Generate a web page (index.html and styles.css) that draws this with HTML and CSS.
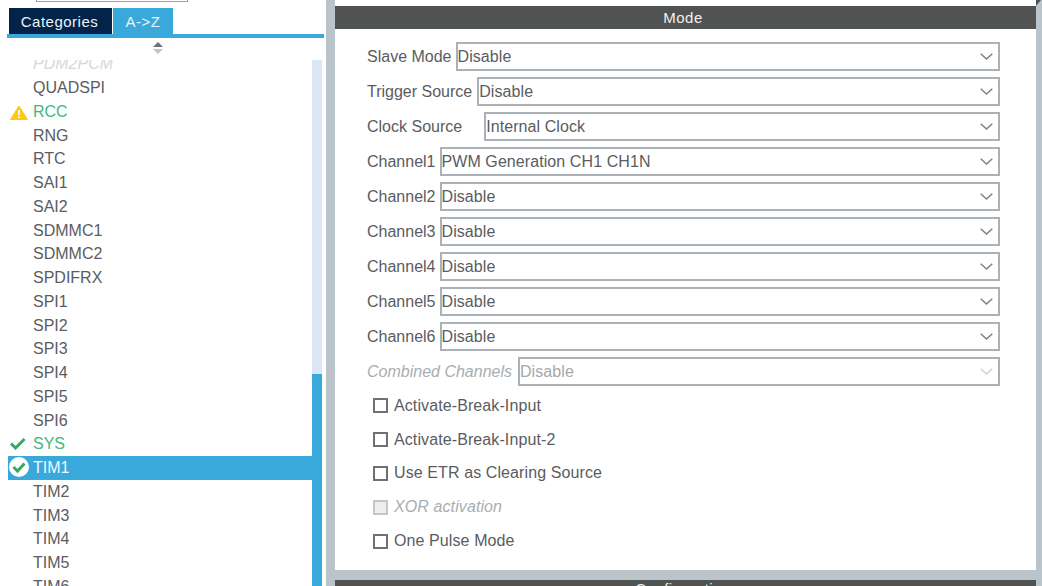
FILE: index.html
```html
<!DOCTYPE html>
<html lang="en">
<head>
<meta charset="utf-8">
<title>Pinout mode</title>
<link rel="stylesheet" href="styles.css">
</head>
<body>
<svg class="defs" width="0" height="0" aria-hidden="true">
  <symbol id="chev" viewBox="0 0 13 7"><path d="M0.7 0.7 L6.5 6 L12.3 0.7" fill="none" stroke="currentColor" stroke-width="1.5"/></symbol>
</svg>
<div class="app">
  <aside class="side">
    <div class="search-stub"></div>
    <div class="tabs">
      <div class="tab tab-dark">Categories</div>
      <div class="tab tab-blue">A-&gt;Z</div>
    </div>
    <div class="list-panel">
      <div class="sorter">
        <svg width="12" height="14" viewBox="0 0 12 14"><path d="M6 1 L11 6 H1 Z" fill="#6f7273"/><path d="M1 8 H11 L6 13 Z" fill="#c2c5c6"/></svg>
      </div>
      <div class="list-body">
        <div class="list">
          <div class="row row-ghost">PDM2PCM</div>
          <div class="row">QUADSPI</div>
          <div class="row row-ok"><svg class="ico" width="18" height="15" viewBox="0 0 18 15"><path d="M9 1 L17.5 14.5 H0.5 Z" fill="#fbc916" stroke="#fbc916" stroke-linejoin="round"/><path d="M9 5 V10 M9 11.3 V13" stroke="#fff" stroke-width="1.8"/></svg>RCC</div>
          <div class="row">RNG</div>
          <div class="row">RTC</div>
          <div class="row">SAI1</div>
          <div class="row">SAI2</div>
          <div class="row">SDMMC1</div>
          <div class="row">SDMMC2</div>
          <div class="row">SPDIFRX</div>
          <div class="row">SPI1</div>
          <div class="row">SPI2</div>
          <div class="row">SPI3</div>
          <div class="row">SPI4</div>
          <div class="row">SPI5</div>
          <div class="row">SPI6</div>
          <div class="row row-ok"><svg class="ico ico-check" width="16" height="13" viewBox="0 0 16 13"><path d="M1 6.5 L5.5 11 L14.5 2" fill="none" stroke="#3ba56b" stroke-width="3"/></svg>SYS</div>
          <div class="row row-sel"><svg class="ico ico-round" width="20" height="20" viewBox="0 0 20 20"><circle cx="10" cy="10" r="10" fill="#fff"/><path d="M4.5 10 L8.5 14 L15.5 6.5" fill="none" stroke="#3ba56b" stroke-width="3"/></svg>TIM1</div>
          <div class="row">TIM2</div>
          <div class="row">TIM3</div>
          <div class="row">TIM4</div>
          <div class="row">TIM5</div>
          <div class="row">TIM6</div>
        </div>
        <div class="scrolltrack"><div class="scrollthumb"></div></div>
      </div>
    </div>
  </aside>
  <div class="divider"></div>
  <main class="main">
    <div class="head">Mode</div>
    <div class="form">
      <div class="field"><label class="lab">Slave Mode</label><div class="sel"><span>Disable</span><svg class="chev"><use href="#chev"/></svg></div></div>
      <div class="field"><label class="lab lab-mid">Trigger Source</label><div class="sel"><span>Disable</span><svg class="chev"><use href="#chev"/></svg></div></div>
      <div class="field"><label class="lab lab-wide">Clock Source</label><div class="sel"><span>Internal Clock</span><svg class="chev"><use href="#chev"/></svg></div></div>
      <div class="field"><label class="lab">Channel1</label><div class="sel"><span>PWM Generation CH1 CH1N</span><svg class="chev"><use href="#chev"/></svg></div></div>
      <div class="field"><label class="lab">Channel2</label><div class="sel"><span>Disable</span><svg class="chev"><use href="#chev"/></svg></div></div>
      <div class="field"><label class="lab">Channel3</label><div class="sel"><span>Disable</span><svg class="chev"><use href="#chev"/></svg></div></div>
      <div class="field"><label class="lab">Channel4</label><div class="sel"><span>Disable</span><svg class="chev"><use href="#chev"/></svg></div></div>
      <div class="field"><label class="lab">Channel5</label><div class="sel"><span>Disable</span><svg class="chev"><use href="#chev"/></svg></div></div>
      <div class="field"><label class="lab">Channel6</label><div class="sel"><span>Disable</span><svg class="chev"><use href="#chev"/></svg></div></div>
      <div class="field field-off"><label class="lab">Combined Channels</label><div class="sel"><span>Disable</span><svg class="chev"><use href="#chev"/></svg></div></div>
      <div class="checks">
        <div class="check"><span class="box"></span>Activate-Break-Input</div>
        <div class="check"><span class="box"></span>Activate-Break-Input-2</div>
        <div class="check"><span class="box"></span>Use ETR as Clearing Source</div>
        <div class="check check-off"><span class="box"></span>XOR activation</div>
        <div class="check"><span class="box"></span>One Pulse Mode</div>
      </div>
    </div>
    <div class="gap"></div>
    <div class="head head-next">Configuration</div>
  </main>
</div>
</body>
</html>
```
FILE: styles.css
```css
* { box-sizing: border-box; }
html, body { margin: 0; height: 100%; overflow: hidden; background: #fff; }
body { font-family: "Liberation Sans", Arial, sans-serif; font-size: 16px; color: #5a5c62; }
.defs { position: absolute; }
.app { display: flex; width: 1042px; height: 586px; overflow: hidden; background: #b9c5cb; }
.side { width: 326px; flex: none; padding-left: 7px; background: #fff; }
.search-stub { width: 152px; height: 2px; margin-left: 29px; border: 1px solid #9aa0a5; border-top: 0; }
.tabs { display: flex; gap: 1px; margin: 6px 0 0 2px; height: 26px; }
.tab { color: #eef3f6; display: flex; align-items: center; justify-content: center; font-size: 15px; letter-spacing: .5px; }
.tab-dark { width: 103px; padding-right: 2px; background: #03234b; }
.tab-blue { width: 60px; background: #39a9dc; }
.list-panel { height: 552px; border-top: 4px solid #39a9dc; margin-right: 2px; }
.sorter { height: 22px; display: flex; justify-content: center; padding: 3px 0 0 0; width: 301px; }
.list-body { display: flex; height: 526px; overflow: hidden; }
.list { flex: 1; padding-left: 1px; margin-top: -7.7px; }
.row { height: 23.75px; line-height: 23.75px; padding-left: 25px; position: relative; white-space: nowrap; }
.row-ghost { color: #d3d8dd; font-style: italic; overflow: hidden; }
.row-ok { color: #3fb97c; }
.row-sel { background: #39a9dc; color: #f2f8fb; }
.ico { position: absolute; left: 2px; top: 5px; }
.ico-check { left: 2px; top: 5px; }
.ico-round { left: 1px; top: 1px; }
.scrolltrack { width: 10px; flex: none; margin-right: 2px; background: #d9e7f4; display: flex; flex-direction: column; justify-content: flex-end; }
.scrollthumb { height: 212px; background: #39a9dc; }
.divider { width: 9px; flex: none; background: #b9c5cb; }
.main { position: relative; width: 701px; height: 610px; flex: none; display: flex; flex-direction: column; padding-top: 6px; background: #fff; }
.main::after { content: ""; position: absolute; left: 100%; top: 0; width: 5px; height: 6px; background: #505352; clip-path: polygon(0 0, 100% 0, 0 100%); }
.head { height: 23px; flex: none; padding-right: 5px; background: #505352; color: #f0f0f0; text-align: center; line-height: 23px; font-size: 15px; letter-spacing: .5px; }
.form { height: 541px; flex: none; padding: 13px 36px 0 32px; }
.field { display: flex; align-items: center; height: 29px; margin-bottom: 6px; }
.lab { white-space: nowrap; margin-right: 4px; }
.lab-mid { margin-right: 5px; }
.lab-wide { margin-right: 22px; }
.sel { flex: 1; height: 29px; border: 2px solid #aab2b8; display: flex; align-items: center; justify-content: space-between; padding-right: 5px; letter-spacing: .08px; }
.chev { width: 13px; height: 7px; color: #7c8185; }
.field-off .lab { color: #a9adb0; font-style: italic; margin-right: 6px; }
.field-off .sel { color: #a4a8ab; }
.field-off .chev { color: #cfd2d4; }
.checks { margin-top: -3px; padding-left: 6px; }
.check { display: flex; align-items: center; height: 33.8px; letter-spacing: .1px; }
.box { width: 15px; height: 15px; border: 2px solid #6e7072; margin-right: 6px; flex: none; }
.check-off { color: #a9adb0; font-style: italic; }
.check-off .box { border-color: #c3c6c8; background: #eceeef; }
.gap { height: 10px; flex: none; background: #b9c5cb; }
.head-next { line-height: 17px; }
```
